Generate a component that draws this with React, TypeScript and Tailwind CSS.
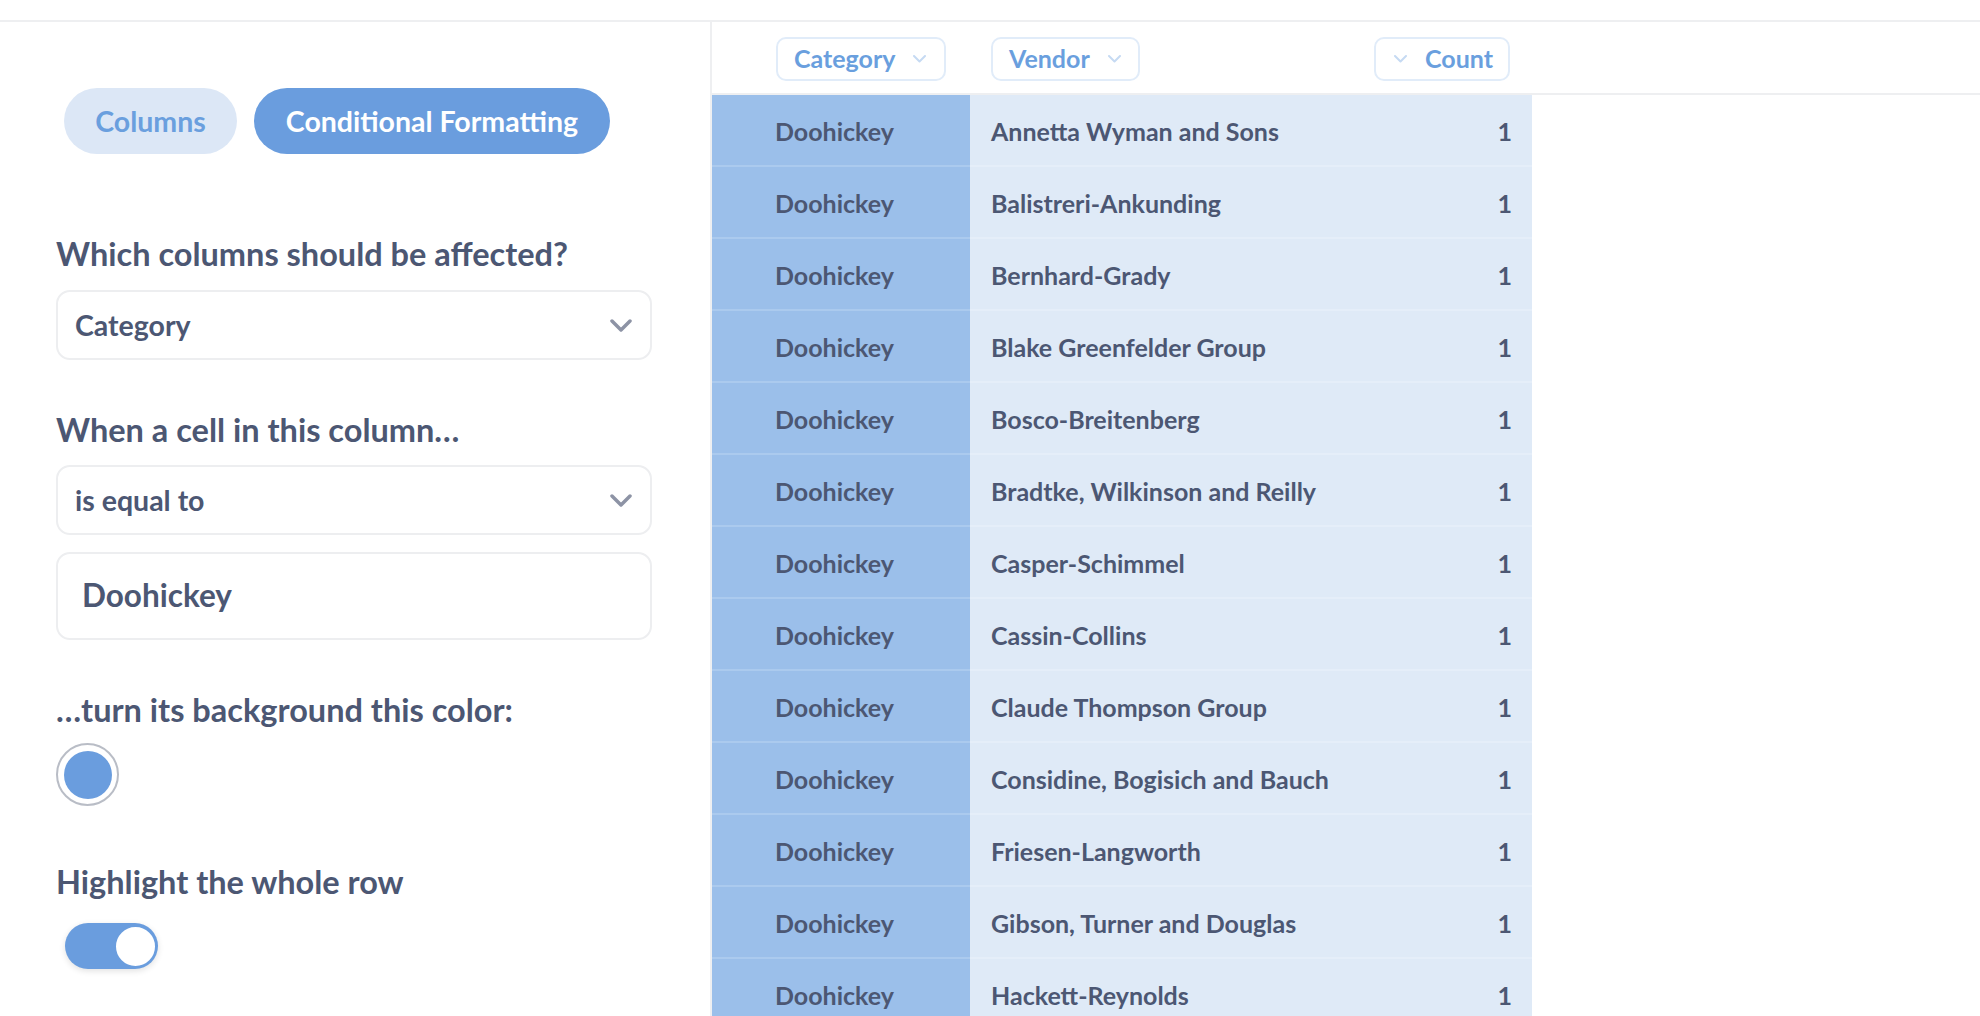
import React from 'react';

const vendors = [
  'Annetta Wyman and Sons',
  'Balistreri-Ankunding',
  'Bernhard-Grady',
  'Blake Greenfelder Group',
  'Bosco-Breitenberg',
  'Bradtke, Wilkinson and Reilly',
  'Casper-Schimmel',
  'Cassin-Collins',
  'Claude Thompson Group',
  'Considine, Bogisich and Bauch',
  'Friesen-Langworth',
  'Gibson, Turner and Douglas',
  'Hackett-Reynolds',
];

function Chevron({ className }: { className?: string }) {
  return (
    <svg className={className} viewBox="0 0 22 13" fill="none">
      <path d="M2 2l9 9 9-9" stroke="currentColor" strokeWidth="3.5" strokeLinecap="round" strokeLinejoin="round" />
    </svg>
  );
}

function SmallChevron() {
  return (
    <svg className="w-[13px] h-[8px] text-[#C6DAF3]" viewBox="0 0 13 8" fill="none">
      <path d="M1 1l5.5 5.5L12 1" stroke="currentColor" strokeWidth="2" strokeLinecap="round" strokeLinejoin="round" />
    </svg>
  );
}

function Label({ children, className = '' }: { children: React.ReactNode; className?: string }) {
  return <h3 className={`text-[32.5px] leading-[36px] font-bold text-[#4C5773] ${className}`}>{children}</h3>;
}

function Select({ value }: { value: string }) {
  return (
    <div className="h-[70px] rounded-[14px] border-2 border-[#EDEEF0] flex items-center justify-between pl-[17px] pr-[18px]">
      <span className="text-[28.5px] font-bold text-[#4C5773]">{value}</span>
      <Chevron className="w-[22px] h-[13px] text-[#8D93A5]" />
    </div>
  );
}

export default function App() {
  return (
    <div className="w-[1980px] h-[1016px] overflow-hidden bg-white flex flex-col font-['Lato',sans-serif]">
      <div className="h-[22px] shrink-0 border-b-2 border-[#EEEFF1]" />
      <div className="flex flex-1 min-h-0">
        <aside className="w-[712px] shrink-0 border-r-2 border-[#EEEFF1] pl-[56px] pr-[58px]">
          <div className="flex gap-[17px] mt-[66px] ml-[8px]">
            <button className="h-[66px] w-[173px] rounded-full bg-[#DCE7F6] text-[#6A9FDE] text-[28.5px] font-bold">Columns</button>
            <button className="h-[66px] w-[356px] rounded-full bg-[#6A9DDE] text-white text-[28.5px] font-bold">Conditional Formatting</button>
          </div>

          <Label className="mt-[82px]">Which columns should be affected?</Label>
          <div className="mt-[18px]">
            <Select value="Category" />
          </div>

          <Label className="mt-[52px]">When a cell in this column…</Label>
          <div className="mt-[17px]">
            <Select value="is equal to" />
          </div>
          <div className="mt-[17px] h-[88px] rounded-[14px] border-2 border-[#EDEEF0] flex items-center pl-[24px]">
            <span className="text-[31.5px] font-bold text-[#4C5773]">Doohickey</span>
          </div>

          <Label className="mt-[52px]">…turn its background this color:</Label>
          <div className="mt-[15px] w-[63px] h-[63px] rounded-full border-2 border-[#B9BDC6] flex items-center justify-center">
            <div className="w-[48px] h-[48px] rounded-full bg-[#6A9DDE]" />
          </div>

          <Label className="mt-[58px]">Highlight the whole row</Label>
          <div className="mt-[23px] ml-[9px] w-[93px] h-[46px] rounded-full bg-[#6A9DDE] shadow-[0_2px_6px_rgba(0,0,0,0.12)] flex items-center justify-end pr-[1px]">
            <div className="w-[43px] h-[43px] rounded-full bg-white border-2 border-[#6A9DDE]" />
          </div>
        </aside>

        <main className="flex-1 min-w-0">
          <div className="w-[820px]">
            <div className="h-[73px] flex items-center border-b-2 border-[#EEEFF1] w-[1268px] pt-[2px]">
              <div className="w-[258px] pl-[64px]">
                <div className="h-[44px] w-[170px] rounded-[10px] border-2 border-[#E1ECF9] flex items-center pl-[16px] gap-[18px]">
                  <span className="text-[25px] font-bold text-[#6A9FDE]">Category</span>
                  <SmallChevron />
                </div>
              </div>
              <div className="w-[562px] flex items-center justify-between pl-[21px] pr-[22px]">
                <div className="h-[44px] w-[149px] rounded-[10px] border-2 border-[#E1ECF9] flex items-center pl-[16px] gap-[18px]">
                  <span className="text-[25px] font-bold text-[#6A9FDE]">Vendor</span>
                  <SmallChevron />
                </div>
                <div className="h-[44px] w-[136px] rounded-[10px] border-2 border-[#E1ECF9] flex items-center pl-[18px] gap-[18px]">
                  <SmallChevron />
                  <span className="text-[25px] font-bold text-[#6A9FDE]">Count</span>
                </div>
              </div>
            </div>
            {vendors.map((v) => (
              <div key={v} className="h-[72px] flex text-[25px] font-bold text-[#4C5773]">
                <div className="w-[258px] bg-[#9BBFEA] border-b-2 border-[#ABCAEE] flex items-center pl-[63px] pt-[3px]">Doohickey</div>
                <div className="w-[562px] bg-[#DFEAF7] border-b-2 border-[#E5EEF9] flex items-center justify-between pl-[21px] pr-[20px] pt-[3px]">
                  <span>{v}</span>
                  <span>1</span>
                </div>
              </div>
            ))}
          </div>
        </main>
      </div>
    </div>
  );
}
